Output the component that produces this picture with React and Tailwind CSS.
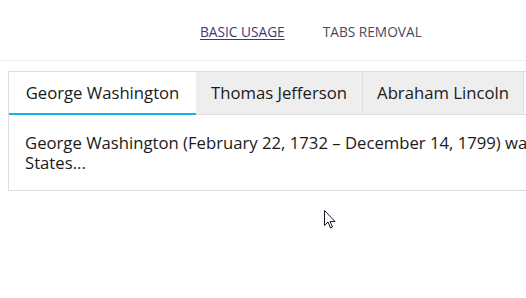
import React from "react";

export default function App() {
  const font = { fontFamily: '"Open Sans", "Noto Sans", sans-serif' };
  return (
    <div className="relative w-[526px] h-[298px] overflow-hidden bg-white" style={font}>
      <div className="h-[61px] border-b border-[#eeeeee] flex items-center pl-[200px] gap-[38px] text-[13.7px] pt-[4px]">
        <a className="text-[#3b3b78] underline underline-offset-2">BASIC USAGE</a>
        <a className="text-[#4a4a5a]">TABS REMOVAL</a>
      </div>
      <div className="ml-[8px] mt-[10px] w-[820px] border border-[#dddddd] text-[#1a1a1a]">
        <div className="flex h-[43px] border-b border-[#dddddd] text-[16.7px]">
          <div className="w-[187px] flex items-center justify-center bg-white border-b-2 border-[#12b5ee] -mb-px">George Washington</div>
          <div className="w-[166px] flex items-center justify-center bg-[#eeeeee]">Thomas Jefferson</div>
          <div className="w-[162px] flex items-center justify-center bg-[#eeeeee] border-l border-r border-[#dddddd]">Abraham Lincoln</div>
        </div>
        <div className="px-[16px] pt-[18px] pb-[17px] text-[16.7px] leading-[20px]">
          George Washington (February 22, 1732 – December 14, 1799) was the first President of the United States...
        </div>
      </div>
      <svg className="absolute left-[324px] top-[210px]" width="13" height="20" viewBox="0 0 13 20">
        <path d="M0.5 0.5 L0.5 15.5 L4 12 L6.5 18 L8.5 17 L6 11.5 L11 11.5 Z" fill="white" stroke="#1a1a2a" strokeWidth="1" strokeLinejoin="round" />
      </svg>
    </div>
  );
}
